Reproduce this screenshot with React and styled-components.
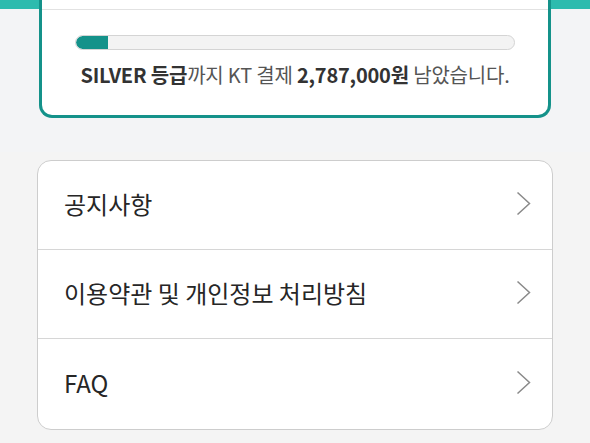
import React from 'react'
import styled, { createGlobalStyle } from 'styled-components'

const GlobalStyle = createGlobalStyle`
  html, body {
    margin: 0;
    padding: 0;
    background: #f4f4f4;
    font-family: "Noto Sans CJK KR", "Noto Sans", sans-serif;
  }
`

const Page = styled.div`
  width: 590px;
  min-height: 443px;
  background: #f4f4f4;
`

const TopSection = styled.section`
  background: linear-gradient(#2dbbae 0, #2dbbae 9px, #f3f4f6 9px);
  padding: 0 39px 34px;
`

const GradeCard = styled.div`
  background: #fff;
  border: 3px solid #14928a;
  border-top: none;
  border-radius: 0 0 13px 13px;
`

const UpperRow = styled.div`
  height: 9px;
  border-bottom: 1px solid #e2e2e2;
`

const GradeBody = styled.div`
  padding: 25px 33px 27px;
  display: flex;
  flex-direction: column;
  align-items: center;
`

const Track = styled.div`
  width: 100%;
  height: 15px;
  box-sizing: border-box;
  border: 1px solid #d4d4d4;
  border-radius: 8px;
  background: #f3f3f3;
  overflow: hidden;
`

const Fill = styled.div`
  height: 100%;
  background: #14928a;
  border-radius: 8px 0 0 8px;
`

const Message = styled.p`
  margin: 12px 0 0;
  font-size: 20px;
  line-height: 26px;
  color: #555;
  letter-spacing: -0.2px;
  white-space: nowrap;

  b {
    color: #333;
    font-weight: 700;
  }
`

const ListSection = styled.section`
  padding: 8px 37px 13px;
`

const MenuCard = styled.ul`
  list-style: none;
  margin: 0;
  padding: 0;
  background: #fff;
  border: 1px solid #cdcdcd;
  border-radius: 14px;
  overflow: hidden;
`

const MenuItem = styled.li`
  height: ${p => (p.$last ? 87 : 85)}px;
  display: flex;
  align-items: center;
  justify-content: space-between;
  padding: 0 20px 3px 26px;
  border-top: ${p => (p.$first ? 'none' : '1px solid #d6d6d6')};
  font-size: 24px;
  color: #262626;
`

const Chevron = () => (
  <svg width="16" height="25" viewBox="0 0 16 25" fill="none">
    <path d="M1.5 1.5 L13.5 12.5 L1.5 23.5" stroke="#8a8a8a" strokeWidth="1.5" />
  </svg>
)

const menus = ['공지사항', '이용약관 및 개인정보 처리방침', 'FAQ']

export default function App() {
  const progress = 32 / 439
  return (
    <Page>
      <GlobalStyle />
      <TopSection>
        <GradeCard>
          <UpperRow />
          <GradeBody>
            <Track>
              <Fill style={{ width: `${progress * 100}%` }} />
            </Track>
            <Message>
              <b>SILVER 등급</b>까지 KT 결제 <b>2,787,000원</b> 남았습니다.
            </Message>
          </GradeBody>
        </GradeCard>
      </TopSection>
      <ListSection>
        <MenuCard>
          {menus.map((m, i) => (
            <MenuItem key={m} $first={i === 0} $last={i === menus.length - 1}>
              <span>{m}</span>
              <Chevron />
            </MenuItem>
          ))}
        </MenuCard>
      </ListSection>
    </Page>
  )
}
